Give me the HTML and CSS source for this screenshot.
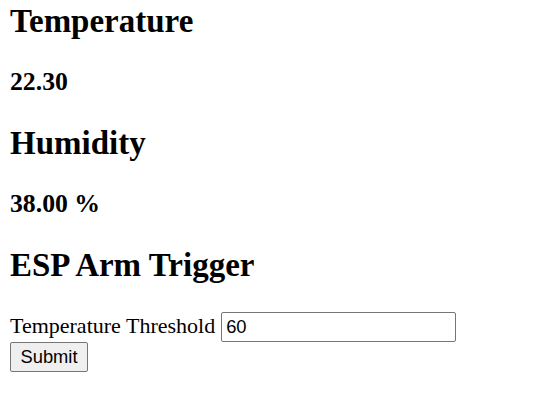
FILE: index.html
```html
<!DOCTYPE html>
<html>
<head>
<meta charset="utf-8">
<title>ESP</title>
<link rel="stylesheet" href="styles.css">
</head>
<body>
<h2 class="title first">Temperature</h2>
<h3 class="value">22.30</h3>
<h2 class="title">Humidity</h2>
<h3 class="value">38.00 %</h3>
<h2 class="title">ESP Arm Trigger</h2>
<form class="form">
  <div class="row">
    <span class="label">Temperature Threshold</span>
    <input class="field" type="text" name="threshold" value="60">
  </div>
  <input class="btn" type="submit" value="Submit">
</form>
</body>
</html>
```
FILE: styles.css
```css
html, body {
  margin: 0;
  padding: 0;
}
body {
  padding-left: 10px;
  font-family: "Liberation Serif", "Times New Roman", serif;
  font-size: 22px;
  color: #000;
  background: #fff;
}
.title {
  font-size: 33px;
  line-height: 38px;
  font-weight: bold;
  margin: 27px 0;
}
.first {
  margin-top: 1.5px;
}
.value {
  font-size: 25.74px;
  line-height: 30px;
  font-weight: bold;
  margin: 27px 0;
}
.form {
  margin-top: 28px;
}
.row {
  display: flex;
  align-items: baseline;
  gap: 6px;
}
.label {
  line-height: 26px;
}
.field {
  box-sizing: border-box;
  width: 235px;
  height: 30px;
  margin: 0;
  padding: 1px 4px;
  border: 1px solid #767676;
  border-radius: 2px;
  font-family: "Liberation Sans", Arial, sans-serif;
  font-size: 18.33px;
  color: #000;
  background: #fff;
}
.btn {
  display: block;
  box-sizing: border-box;
  width: 78px;
  height: 30px;
  margin: 0;
  padding: 0;
  border: 1px solid #767676;
  border-radius: 2px;
  background: #efefef;
  font-family: "Liberation Sans", Arial, sans-serif;
  font-size: 18.33px;
  color: #000;
}
```
